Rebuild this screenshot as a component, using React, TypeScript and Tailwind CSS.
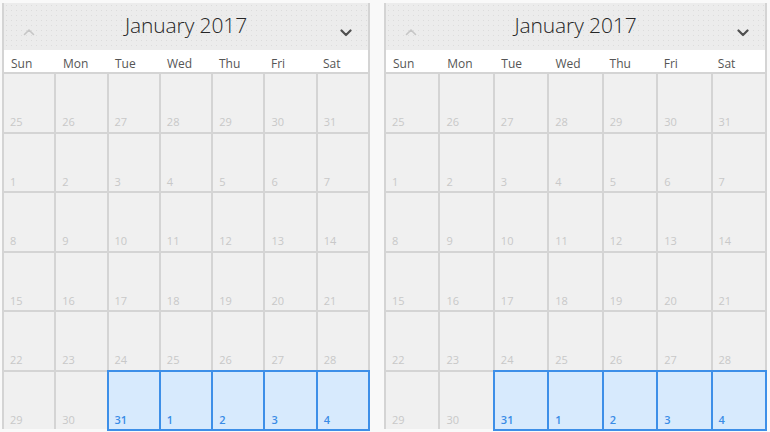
import React from 'react';

const dayNames = ['Sun', 'Mon', 'Tue', 'Wed', 'Thu', 'Fri', 'Sat'];

const days = [
  25, 26, 27, 28, 29, 30, 31,
  1, 2, 3, 4, 5, 6, 7,
  8, 9, 10, 11, 12, 13, 14,
  15, 16, 17, 18, 19, 20, 21,
  22, 23, 24, 25, 26, 27, 28,
  29, 30, 31, 1, 2, 3, 4,
];

function Chevron({ up, className }: { up?: boolean; className?: string }) {
  return (
    <svg width="12" height="8" viewBox="0 0 12 8" className={className}>
      <path
        d={up ? 'M1.5 6.5 L6 2 L10.5 6.5' : 'M1.5 1.5 L6 6 L10.5 1.5'}
        fill="none"
        stroke="currentColor"
        strokeWidth={up ? 1.6 : 2.2}
        strokeLinecap="round"
        strokeLinejoin="round"
      />
    </svg>
  );
}

function Calendar({ width }: { width: string }) {
  return (
    <div className={`${width} h-[426px] flex flex-col border-x-2 border-[#d4d4d4] bg-[#d4d4d4]`}>
      {/* header with the month title */}
      <div className="relative h-[47px] bg-[#ececec] bg-[radial-gradient(#dcdcdc_0.6px,transparent_0.8px)] bg-[size:5px_5px] flex items-start justify-center">
        <Chevron up className="absolute left-[19px] top-[25px] text-[#c6c6c6]" />
        <span className="pt-[9px] text-[21px] leading-[26px] text-[#262626] font-['Open_Sans',sans-serif] font-light tracking-[-0.1px]">
          January 2017
        </span>
        <Chevron className="absolute right-[16px] top-[26px] text-[#505050]" />
      </div>

      {/* day names */}
      <div className="h-[24px] bg-white grid grid-cols-7 border-b-2 border-[#d4d4d4]">
        {dayNames.map((d) => (
          <div key={d} className="pl-[7px] pt-[3px] text-[12px] leading-[21px] text-[#555] font-['Open_Sans',sans-serif]">
            {d}
          </div>
        ))}
      </div>

      {/* day cells */}
      <div className="flex-1 grid grid-cols-7 grid-rows-6 gap-[2px]">
        {days.map((n, i) => {
          const selected = i >= 37;
          return (
            <div
              key={i}
              className={
                selected
                  ? 'relative bg-[#d7eafd] outline-2 outline-[#3d8fe8] flex items-end pl-[6px] pb-[1px] text-[11px] font-semibold text-[#3a8ce6] font-["Open_Sans",sans-serif]'
                  : 'bg-[#f0f0f0] flex items-end pl-[6px] pb-[1px] text-[11px] text-[#c8c8c8] font-["Open_Sans",sans-serif]'
              }
            >
              {n}
            </div>
          );
        })}
      </div>
    </div>
  );
}

export default function App() {
  return (
    <div className="w-[770px] h-[432px] bg-[#f9f9f9] flex items-start pt-[3px] pl-[2px] gap-[14px] overflow-hidden">
      <Calendar width="w-[368px]" />
      <Calendar width="w-[383px]" />
    </div>
  );
}
